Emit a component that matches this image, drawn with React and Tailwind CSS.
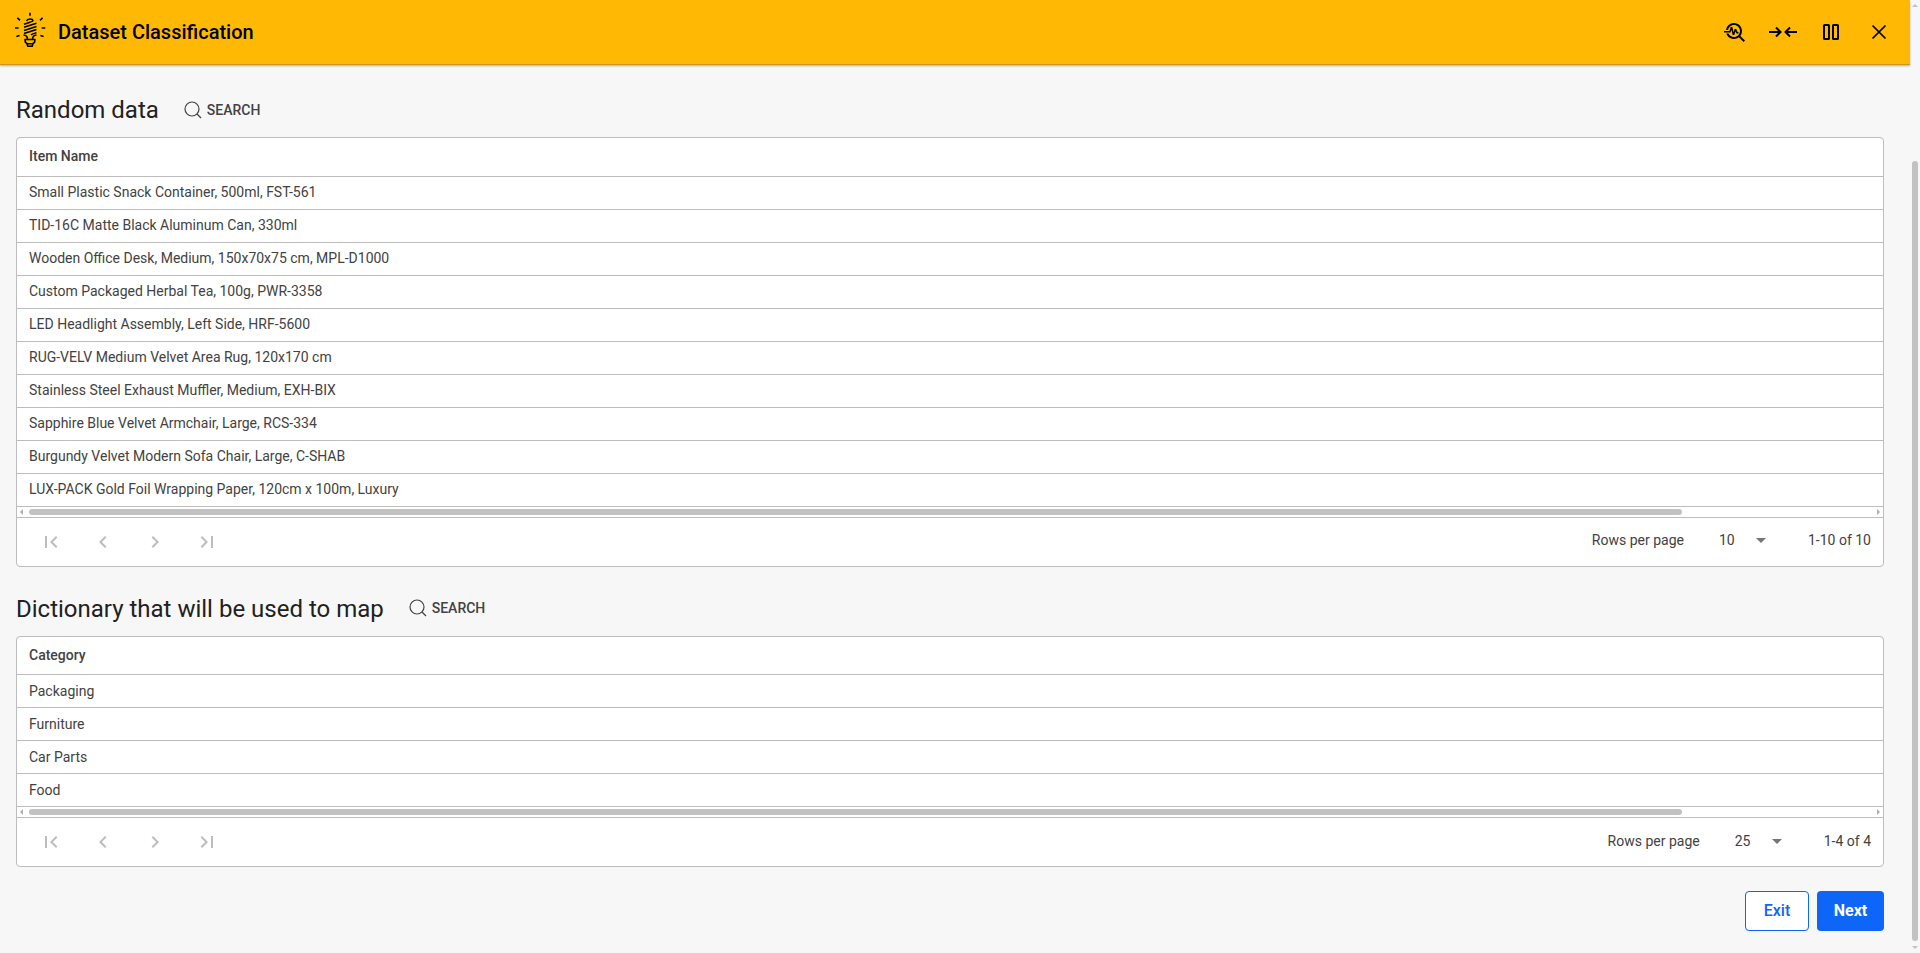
import { useState } from 'react'
import { MdTroubleshoot, MdFirstPage, MdChevronLeft, MdChevronRight, MdLastPage, MdArrowDropDown } from 'react-icons/md'

const ITEMS = [
  'Small Plastic Snack Container, 500ml, FST-561',
  'TID-16C Matte Black Aluminum Can, 330ml',
  'Wooden Office Desk, Medium, 150x70x75 cm, MPL-D1000',
  'Custom Packaged Herbal Tea, 100g, PWR-3358',
  'LED Headlight Assembly, Left Side, HRF-5600',
  'RUG-VELV Medium Velvet Area Rug, 120x170 cm',
  'Stainless Steel Exhaust Muffler, Medium, EXH-BIX',
  'Sapphire Blue Velvet Armchair, Large, RCS-334',
  'Burgundy Velvet Modern Sofa Chair, Large, C-SHAB',
  'LUX-PACK Gold Foil Wrapping Paper, 120cm x 100m, Luxury',
]

const CATEGORIES = ['Packaging', 'Furniture', 'Car Parts', 'Food']

const BulbLogo = () => (
  <svg className="mb-1" width="32" height="36" viewBox="0 0 32 36" fill="none" stroke="#000" strokeWidth="1.6" strokeLinejoin="round" aria-hidden="true">
    {/* rays */}
    <path d="M16 .8v3M3.400 5.800 6 8.300M28.600 5.800 26 8.300M1 16h3.600M27.700 16h3.600M2.400 24.600l3.200-1M29.600 24.600l-3.200-1" />
    {/* coil */}
    <path d="M12.500 9c1-2.500 6-2.500 6.500-.5.200 1-3 1.500-9 3.800M10 15.200l12.500-4M10 18.400l12.500-4M10 21.600l12.500-4" />
    <path d="M22.500 20.800c-3 .8-4 1-5.500 2" />
    {/* socket */}
    <path d="M9.500 23c3 .2 4 1.500 4 4.500M22.500 23c-3 .2-4 1.500-4 4.500M11 27.500h10l-.5 3-2 1.200h-5l-2-1.200zM13 31.700l.8 2.500h4.400l.8-2.500" />
  </svg>
)

const CollapseIcon = () => (
  <svg className="shrink-0" width="28" height="24" viewBox="0 0 28 24" fill="none" stroke="currentColor" strokeWidth="2" aria-hidden="true">
    <path d="M0 12h11M7 7.500l4.500 4.500L7 16.500M28 12H17M21 7.500 16.500 12l4.500 4.500" />
  </svg>
)

const ColumnsIcon = () => (
  <svg width="24" height="24" viewBox="0 0 24 24" fill="none" stroke="currentColor" strokeWidth="2" aria-hidden="true">
    <rect x="5" y="5" width="5" height="14" rx="0.500" />
    <rect x="14" y="5" width="5" height="14" rx="0.500" />
  </svg>
)

const CloseIcon = () => (
  <svg width="24" height="24" viewBox="0 0 24 24" fill="none" stroke="currentColor" strokeWidth="1.700" aria-hidden="true">
    <path d="M5.500 5.500l13 13M18.500 5.500l-13 13" />
  </svg>
)

const SearchIcon = () => (
  <svg width="18" height="18" viewBox="0 0 18 18" fill="none" stroke="currentColor" strokeWidth="1.200" aria-hidden="true">
    <circle cx="8" cy="8" r="7" />
    <path d="M13 13l4 4" />
  </svg>
)

const HorizontalScrollbar = () => (
  <div className="flex h-[10px] items-center" aria-hidden="true">
    <div className="flex w-3 pl-[3px]">
      <div className="border-y-3 border-r-3 border-y-transparent border-r-[#b0b0b0]" />
    </div>
    <div className="h-1.5 flex-[1653] rounded-full bg-[#c2c2c2]" />
    <div className="flex-[189]" />
    <div className="flex w-3 justify-end pr-[3px]">
      <div className="border-y-3 border-l-3 border-y-transparent border-l-[#b0b0b0]" />
    </div>
  </div>
)

const HEADER_ACTIONS = [
  { label: 'Inspect', icon: <MdTroubleshoot size={24} /> },
  { label: 'Collapse', icon: <CollapseIcon /> },
  { label: 'Columns', icon: <ColumnsIcon /> },
  { label: 'Close', icon: <CloseIcon /> },
]

const PAGE_BUTTONS = [
  { label: 'First page', Icon: MdFirstPage },
  { label: 'Previous page', Icon: MdChevronLeft },
  { label: 'Next page', Icon: MdChevronRight },
  { label: 'Last page', Icon: MdLastPage },
]

const DataTable = ({ id, title, column, rows, defaultSize }) => {
  const [size, setSize] = useState(defaultSize)

  return (
    <section>
      <div className="flex h-9 items-center gap-[25px]">
        <h2 className="text-2xl text-[#212121]">{title}</h2>
        <button type="button" className="flex items-center gap-[5px] pb-px text-sm font-medium uppercase">
          <SearchIcon />
          Search
        </button>
      </div>

      <div className="mt-[9px] rounded-[4px] border border-[#bdbdbd] bg-white">
        <table className="w-full text-left text-sm">
          <thead>
            <tr className="border-b border-[#bdbdbd]">
              <th scope="col" className="h-[38px] px-3 pb-px font-medium">{column}</th>
            </tr>
          </thead>
          <tbody>
            {rows.map(row => (
              <tr key={row} className="border-b border-[#bdbdbd]">
                <td className="h-[33px] px-3 pb-px">{row}</td>
              </tr>
            ))}
          </tbody>
        </table>

        <HorizontalScrollbar />

        <div className="flex h-[49px] items-center justify-between border-t border-[#bdbdbd] pr-3 pl-[10px] text-sm">
          <div className="flex gap-1 text-[#bdbdbd]">
            {PAGE_BUTTONS.map(({ label, Icon }) => (
              <button key={label} type="button" disabled aria-label={label} className="flex size-12 items-center justify-center">
                <Icon size={24} />
              </button>
            ))}
          </div>
          <div className="flex items-center pb-[3px]">
            <label htmlFor={id}>Rows per page</label>
            <div className="relative ml-[35px] flex items-center">
              <select id={id} value={size} onChange={e => setSize(Number(e.target.value))} className="w-[54px] appearance-none bg-transparent outline-none">
                <option value={10}>10</option>
                <option value={25}>25</option>
                <option value={50}>50</option>
              </select>
              <MdArrowDropDown size={24} className="pointer-events-none absolute right-0 text-[#757575]" />
            </div>
            <span className="ml-[35px]">1-{rows.length} of {rows.length}</span>
          </div>
        </div>
      </div>
    </section>
  )
}

const PageScrollbar = () => (
  <div className="flex w-[10px] flex-col items-center" aria-hidden="true">
    <div className="flex h-3 pt-1">
      <div className="h-0 border-x-3 border-b-3 border-x-transparent border-b-[#c2c2c2]" />
    </div>
    <div className="flex-[149]" />
    <div className="w-1.5 flex-[780] rounded-full bg-[#c2c2c2]" />
    <div className="flex h-3 items-end pb-1">
      <div className="h-0 border-x-3 border-t-3 border-x-transparent border-t-[#c2c2c2]" />
    </div>
  </div>
)

export default function App() {
  return (
    <div className="flex min-h-screen bg-[#f7f7f7] font-[Roboto,sans-serif] text-[#424242]">
      <div className="flex-1">
        <header className="flex h-16 items-center justify-between bg-[#ffb905] pr-[7px] pl-[14px] text-black shadow-[0_1px_0_#c8991c,0_2px_2px_rgba(0,0,0,0.3)]">
          <div className="flex items-center gap-3">
            <BulbLogo />
            <h1 className="text-xl font-medium">Dataset Classification</h1>
          </div>
          <div className="flex">
            {HEADER_ACTIONS.map(({ label, icon }) => (
              <button key={label} type="button" aria-label={label} className="flex size-12 items-center justify-center">
                {icon}
              </button>
            ))}
          </div>
        </header>

        <main className="flex flex-col gap-6 pt-7 pr-[26px] pl-4">
          <DataTable id="items-rows" title="Random data" column="Item Name" rows={ITEMS} defaultSize={10} />
          <DataTable id="categories-rows" title="Dictionary that will be used to map" column="Category" rows={CATEGORIES} defaultSize={25} />
          <div className="flex justify-end gap-2">
            <button type="button" className="h-10 w-16 rounded-[4px] border border-[#0d66f8] bg-white font-medium text-[#0d66f8]">Exit</button>
            <button type="button" className="h-10 w-[67px] rounded-[4px] bg-[#0d66f8] font-bold text-white">Next</button>
          </div>
        </main>
      </div>
      <PageScrollbar />
    </div>
  )
}
